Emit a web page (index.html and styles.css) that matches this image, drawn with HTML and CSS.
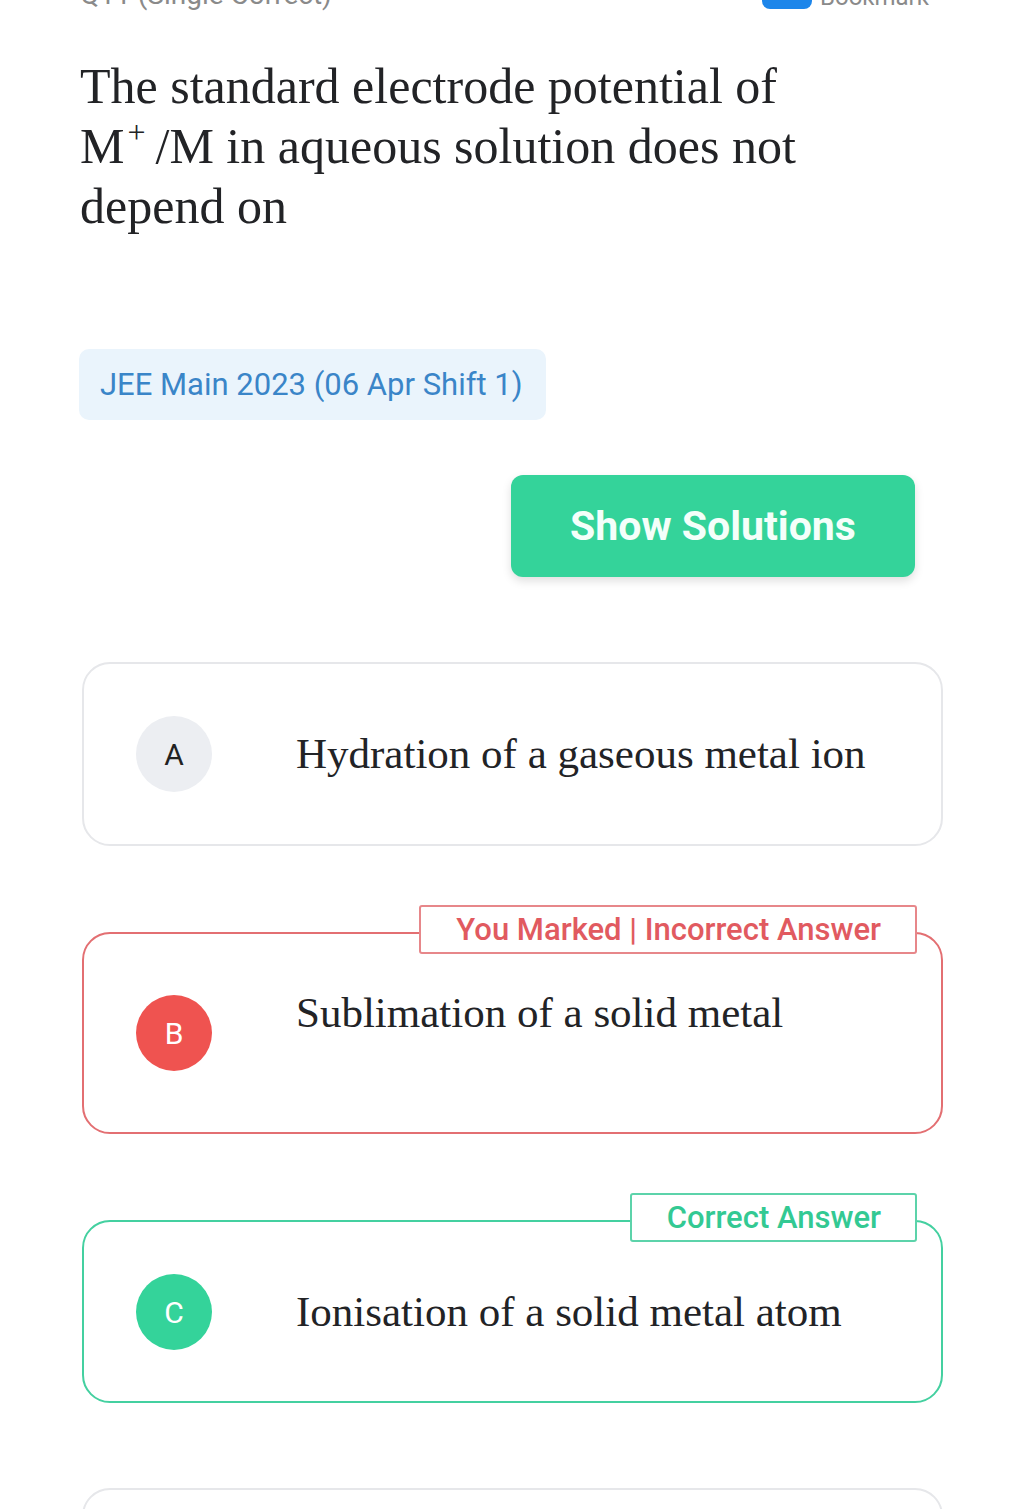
FILE: index.html
```html
<!DOCTYPE html>
<html lang="en">
<head>
  <meta charset="UTF-8" />
  <meta name="viewport" content="width=device-width, initial-scale=1.0"/>
  <title>Question</title>
  <link rel="stylesheet" href="styles.css">
</head>
<body>

<div class="page">

  <div class="q-head">
    <span class="q-type">Q11 (Single Correct)</span>
    <span class="q-mark"></span>
    <span class="q-mark-text">Bookmark</span>
  </div>

  <p class="question">
    The standard electrode potential of<br>
    M<sup>+</sup>/M in aqueous solution does not<br>
    depend on
  </p>

  <div class="tag">JEE Main 2023 (06 Apr Shift 1)</div>

  <div class="actions">
    <button class="show-btn">Show Solutions</button>
  </div>

  <div class="option">
    <div class="letter">A</div>
    <div class="option-text">Hydration of a gaseous metal ion</div>
  </div>

  <div class="option wrong">
    <div class="badge">You Marked | Incorrect Answer</div>
    <div class="letter">B</div>
    <div class="option-text">Sublimation of a solid metal</div>
  </div>

  <div class="option right">
    <div class="badge">Correct Answer</div>
    <div class="letter">C</div>
    <div class="option-text">Ionisation of a solid metal atom</div>
  </div>

  <div class="option last">
    <div class="letter">D</div>
    <div class="option-text">Ionisation of a gaseous metal atom</div>
  </div>

</div>

</body>
</html>
```

FILE: styles.css
```css
body {
  margin: 0;
  background-color: #ffffff;
  font-family: Roboto, "Liberation Sans", sans-serif;
  color: #1f2328;
}
.page {
  padding: 0 81px 0 80px;
  height: 1509px;
  overflow: hidden;
}
.q-head {
  display: flex;
  align-items: flex-end;
  height: 40px;
  margin-top: -31px;
  font-size: 28px;
  line-height: 1;
  color: #8a8a8a;
}
.q-type {
  flex: 1;
}
.q-mark {
  width: 50px;
  height: 40px;
  border-radius: 8px;
  background-color: #1d86ea;
  margin-right: 8px;
}
.q-mark-text {
  width: 123px;
  font-size: 24px;
}
.question {
  margin: 47px 0 0;
  font-family: "Liberation Serif", serif;
  font-size: 50px;
  line-height: 60px;
  color: #222326;
}
.question sup {
  font-size: 32px;
  line-height: 0;
  vertical-align: 20px;
  margin: 0 10px 0 3px;
}
.tag {
  display: inline-block;
  margin: 113px 0 0 -1px;
  padding: 0 23px 0 21px;
  height: 71px;
  line-height: 71px;
  border-radius: 10px;
  background-color: #eaf4fc;
  color: #3a85c8;
  font-size: 31px;
}
.actions {
  display: flex;
  justify-content: flex-end;
  margin-top: 55px;
  padding-right: 28px;
}
.show-btn {
  width: 404px;
  height: 102px;
  border: none;
  border-radius: 12px;
  background-color: #34d39a;
  color: #f4fffa;
  font-family: Roboto, sans-serif;
  font-size: 41px;
  font-weight: 700;
  box-shadow: 0 4px 10px rgba(0,0,0,0.13);
  cursor: pointer;
}
.option {
  position: relative;
  display: flex;
  align-items: center;
  gap: 84px;
  margin: 85px 0 0 2px;
  padding: 52px 54px 52px 52px;
  border: 2px solid #e6e7ea;
  border-radius: 28px;
}
.letter {
  flex: none;
  width: 76px;
  height: 76px;
  border-radius: 50%;
  background-color: #eceef2;
  display: flex;
  align-items: center;
  justify-content: center;
  font-size: 30px;
  color: #222;
}
.option-text {
  font-family: "Liberation Serif", serif;
  font-size: 43px;
  line-height: 1.2;
  color: #222326;
}
.badge {
  position: absolute;
  top: -29px;
  right: 24px;
  height: 45px;
  line-height: 45px;
  padding: 0 34px 0 35px;
  background-color: #fff;
  border: 2px solid;
  border-radius: 3px;
  font-size: 31px;
  font-weight: 500;
}
.wrong {
  margin-top: 86px;
  align-items: flex-start;
  padding-top: 61px;
  padding-bottom: 61px;
  border-color: #e36f72;
}
.wrong .option-text {
  margin-top: -8px;
}
.wrong .letter {
  background-color: #ef5350;
  color: #fff;
}
.wrong .badge {
  border-color: #e7878a;
  color: #e15a60;
}
.right {
  margin-top: 86px;
  padding-bottom: 51px;
  border-color: #44d0a0;
}
.right .letter {
  background-color: #34d39a;
  color: #fff;
}
.right .badge {
  border-color: #5cd3aa;
  color: #33c993;
}
.last {
  margin-top: 85px;
}
```
